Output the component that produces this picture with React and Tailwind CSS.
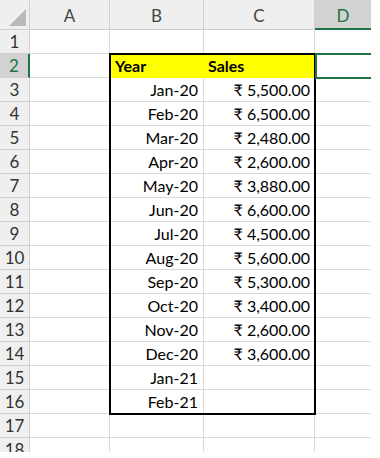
import React from "react";

const rows = [
  ["", ""],
  ["Year", "Sales"],
  ["Jan-20", "₹ 5,500.00"],
  ["Feb-20", "₹ 6,500.00"],
  ["Mar-20", "₹ 2,480.00"],
  ["Apr-20", "₹ 2,600.00"],
  ["May-20", "₹ 3,880.00"],
  ["Jun-20", "₹ 6,600.00"],
  ["Jul-20", "₹ 4,500.00"],
  ["Aug-20", "₹ 5,600.00"],
  ["Sep-20", "₹ 5,300.00"],
  ["Oct-20", "₹ 3,400.00"],
  ["Nov-20", "₹ 2,600.00"],
  ["Dec-20", "₹ 3,600.00"],
  ["Jan-21", ""],
  ["Feb-21", ""],
  ["", ""],
  ["", ""],
];

const font = { fontFamily: "Lato, 'Noto Sans', sans-serif" };

export default function App() {
  return (
    <div className="w-[380px] h-[458px] bg-white">
      <div className="relative w-[371px] h-[452px] overflow-hidden bg-white text-black" style={font}>
        {/* column headers */}
        <div className="flex h-[30px] bg-[#efefef] text-[17px] text-[#444]">
          <div className="relative w-[30px] shrink-0 border-r border-b border-[#cfcfcf]">
            <svg className="absolute right-[3px] bottom-[3px]" width="17" height="17">
              <polygon points="17,0 17,17 0,17" fill="#b9b9b9" />
            </svg>
          </div>
          <div className="w-[80px] shrink-0 border-r border-b border-[#cfcfcf] flex items-end justify-center pb-[1px]">A</div>
          <div className="w-[94px] shrink-0 border-r border-b border-[#cfcfcf] flex items-end justify-center pb-[1px]">B</div>
          <div className="w-[111px] shrink-0 border-r border-b border-[#cfcfcf] flex items-end justify-center pb-[1px]">C</div>
          <div className="flex-1 bg-[#d2d2d2] border-b-2 border-[#217346] flex items-end justify-center text-[#217346]">D</div>
        </div>

        {rows.map(([b, c], i) => {
          const n = i + 1;
          const head = n === 2;
          return (
            <div key={n} className="flex h-[24px] text-[16px]">
              <div
                className={`w-[30px] shrink-0 border-b border-[#cfcfcf] flex items-center justify-center text-[17px] ${
                  head ? "bg-[#d2d2d2] border-r-2 border-r-[#217346] text-[#217346]" : "bg-[#efefef] border-r text-[#333]"
                }`}
              >
                {n}
              </div>
              <div className="w-[80px] shrink-0 border-r border-b border-[#d9d9d9]" />
              <div
                className={`w-[94px] shrink-0 border-b flex items-center px-[5px] ${
                  head ? "bg-[#ffff00] border-[#ffff00] font-bold justify-start" : "border-r border-[#d9d9d9] justify-end"
                }`}
              >
                {b}
              </div>
              <div
                className={`w-[111px] shrink-0 border-r border-b flex items-center px-[4px] ${
                  head ? "bg-[#ffff00] border-[#ffff00] font-bold justify-start" : "border-[#d9d9d9] justify-end"
                }`}
              >
                {c}
              </div>
              <div className="flex-1 border-b border-[#d9d9d9]" />
            </div>
          );
        })}

        {/* outline of the data range */}
        <div className="absolute left-[109px] top-[53px] w-[207px] h-[362px] border-2 border-black pointer-events-none" />
        {/* active cell D2 */}
        <div className="absolute left-[315px] top-[53px] w-[70px] h-[26px] border-2 border-[#217346] pointer-events-none" />
      </div>
    </div>
  );
}
